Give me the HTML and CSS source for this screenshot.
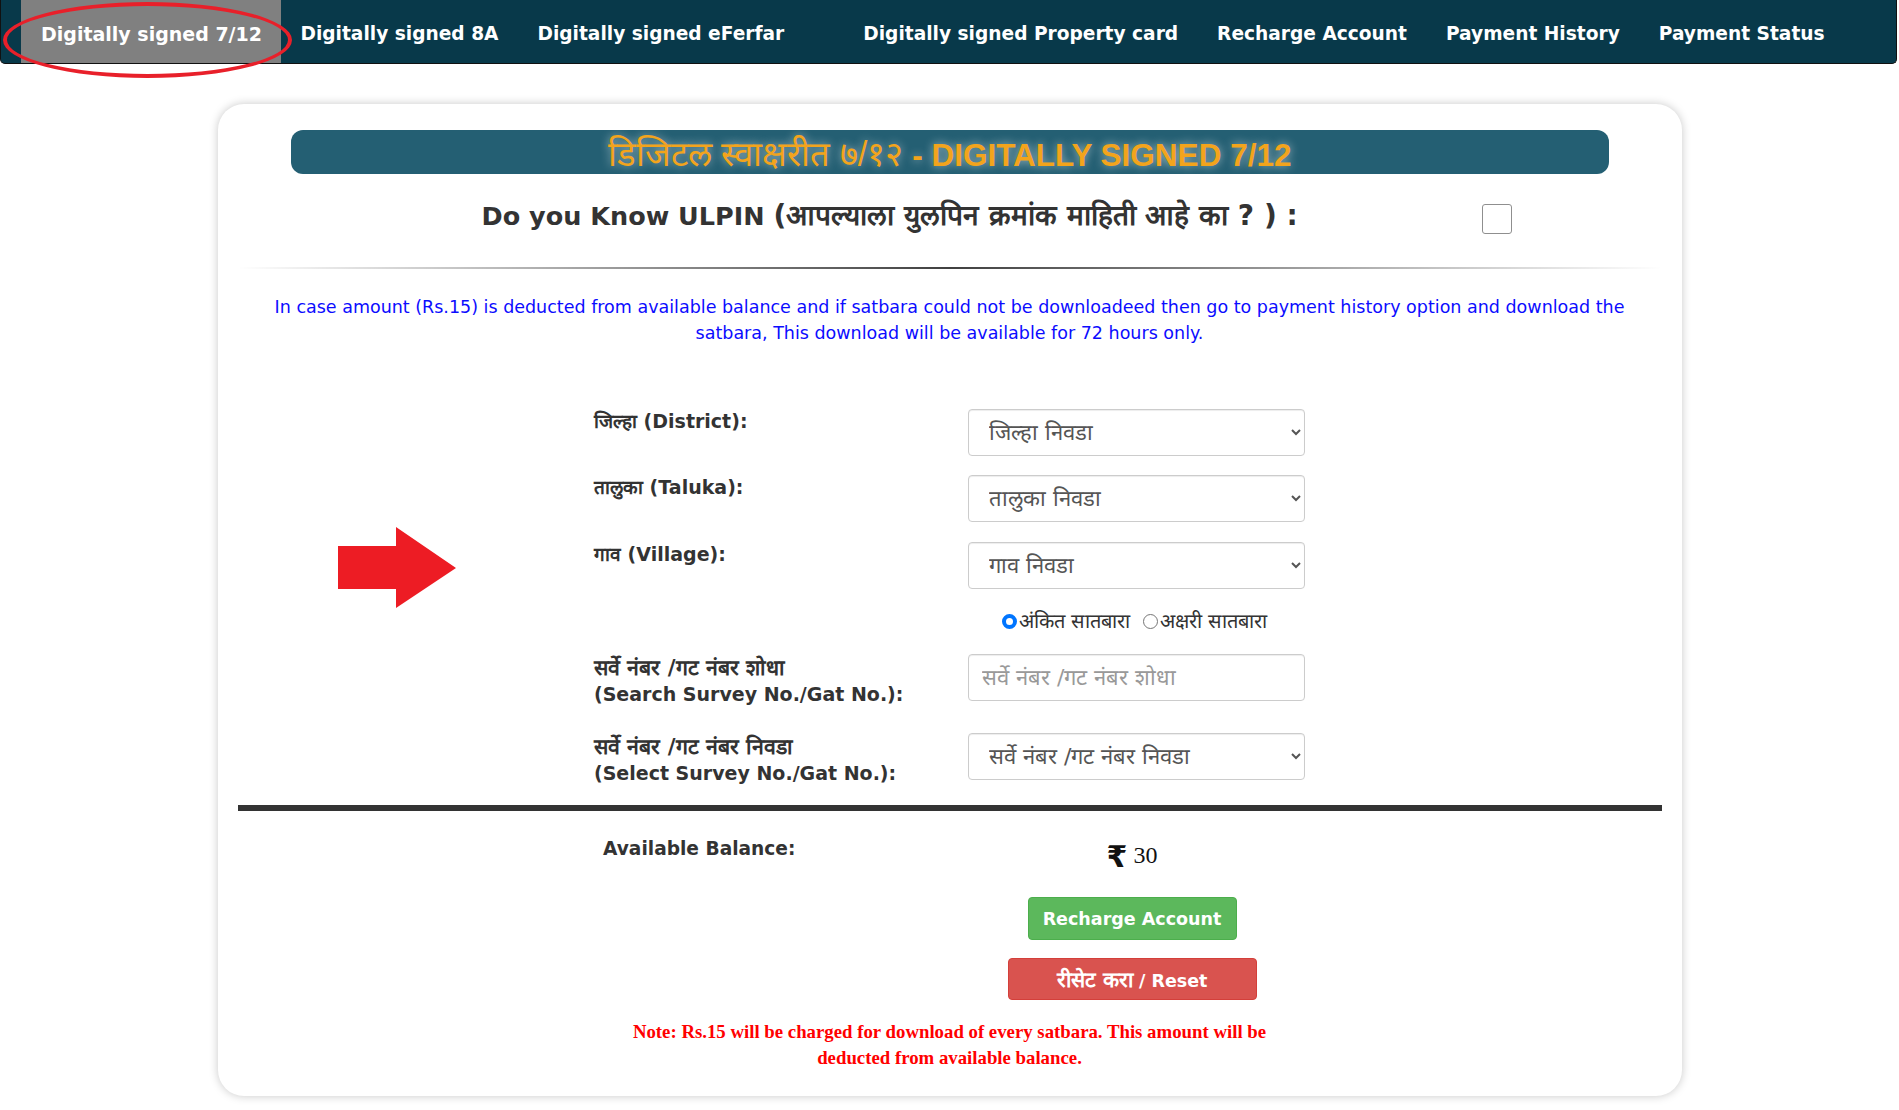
FILE: index.html
```html
<!DOCTYPE html>
<html lang="mr">
<head>
<meta charset="utf-8">
<title>Digitally signed 7/12</title>
<link rel="stylesheet" href="styles.css">
</head>
<body>
<nav class="topnav">
  <a class="nav-item active">Digitally signed 7/12</a>
  <a class="nav-item">Digitally signed 8A</a>
  <a class="nav-item wide">Digitally signed eFerfar</a>
  <a class="nav-item">Digitally signed Property card</a>
  <a class="nav-item">Recharge Account</a>
  <a class="nav-item">Payment History</a>
  <a class="nav-item">Payment Status</a>
</nav>
<div class="annot-ellipse"></div>
<svg class="annot-arrow" width="119" height="82" viewBox="0 0 119 82"><polygon points="0,19 58,19 58,0 118,41 58,81 58,62 0,62" fill="#ed1c24"/></svg>

<main class="card">
  <div class="title-bar"><span class="title-text"><span class="dv-t">डिजिटल स्वाक्षरीत ७/१२</span> - DIGITALLY SIGNED 7/12</span></div>
  <div class="ulpin-row">
    <span class="ulpin-text">Do you Know ULPIN <span class="dv">(आपल्याला युलपिन क्रमांक माहिती आहे का ? ) :</span></span>
    <span class="check-box"></span>
  </div>
  <div class="fade-rule"></div>
  <p class="info">In case amount (Rs.15) is deducted from available balance and if satbara could not be downloadeed then go to payment history option and download the satbara, This download will be available for 72 hours only.</p>

  <div class="form top">
    <div class="lbl">जिल्हा (District):</div>
    <div class="ctl"><select class="fc"><option>जिल्हा निवडा</option></select></div>

    <div class="lbl">तालुका (Taluka):</div>
    <div class="ctl"><select class="fc"><option>तालुका निवडा</option></select></div>

    <div class="lbl">गाव (Village):</div>
    <div class="ctl"><select class="fc"><option>गाव निवडा</option></select></div>

    <div class="lbl"></div>
    <div class="ctl radios">
      <label class="rad"><span class="rdot on"></span>अंकित सातबारा</label>
      <label class="rad"><span class="rdot"></span>अक्षरी सातबारा</label>
    </div>

    <div class="lbl two"><span class="dv-l">सर्वे नंबर /गट नंबर शोधा</span><br>(Search Survey No./Gat No.):</div>
    <div class="ctl"><input class="fc inp" type="text" placeholder="सर्वे नंबर /गट नंबर शोधा"></div>

    <div class="lbl two"><span class="dv-l">सर्वे नंबर /गट नंबर निवडा</span><br>(Select Survey No./Gat No.):</div>
    <div class="ctl"><select class="fc"><option>सर्वे नंबर /गट नंबर निवडा</option></select></div>
  </div>

  <div class="thick-rule"></div>

  <div class="form bottom">
    <div class="lbl bal">Available Balance:</div>
    <div class="ctl center"><span class="rupee">₹</span><span class="amt">30</span></div>

    <div class="lbl"></div>
    <div class="ctl center"><button class="btn green">Recharge Account</button></div>

    <div class="lbl"></div>
    <div class="ctl center"><button class="btn red"><span class="dv-b">रीसेट करा</span> / Reset</button></div>
  </div>

  <p class="note">Note: Rs.15 will be charged for download of every satbara. This amount will be<br>deducted from available balance.</p>
</main>
</body>
</html>
```

FILE: styles.css
```css
html, body { margin: 0; padding: 0; background: #fff; }
body { font-family: "DejaVu Sans", Verdana, sans-serif; color: #333; position: relative; min-height: 1110px; }

.topnav {
  display: flex;
  align-items: stretch;
  height: 63px;
  margin: 0 2px 0 0;
  padding-left: 20px;
  background: #08394a;
  border: 1px solid #111;
  border-top: none;
  border-radius: 0 0 5px 5px;
}
.nav-item {
  display: flex;
  align-items: center;
  padding: 4px 19.5px 0;
  color: #fff;
  font-weight: bold;
  font-size: 18.6px;
  white-space: nowrap;
  cursor: pointer;
}
.nav-item.active { background: #808080; padding: 4px 19px 0 20px; font-size: 19px; }
.nav-item.wide { margin-right: 40px; }

.annot-ellipse {
  position: absolute;
  left: 3px; top: 2px;
  width: 281px; height: 68px;
  border: 4px solid #e8202a;
  border-radius: 50%;
}
.annot-arrow { position: absolute; left: 338px; top: 527px; }

.card {
  box-sizing: border-box;
  width: 1464px;
  height: 992px;
  margin: 40px auto 0;
  padding: 26px 20px 0;
  background: #fff;
  border-radius: 26px;
  box-shadow: 0 0 10px rgba(0,0,0,0.22);
}
.title-bar {
  margin: 0 53px;
  height: 44px;
  border-radius: 12px;
  background: #245f73;
  display: flex;
  align-items: center;
  justify-content: center;
}
.title-text {
  font-family: "Liberation Sans", Arial, sans-serif;
  font-size: 31.5px;
  font-weight: bold;
  color: #f3a41c;
  text-shadow: 0 0 10px rgba(255,255,255,0.6);
  white-space: nowrap;
}
.dv-t { font-size: 1.1em; font-weight: normal; }
.ulpin-row {
  display: flex;
  align-items: center;
  height: 30px;
  margin-top: 30px;
  padding-left: 244px;
}
.ulpin-text { font-size: 25.5px; font-weight: bold; color: #333; white-space: nowrap; margin-top: -11px; }
.dv { font-size: 1.1em; }
.check-box {
  margin-left: auto;
  margin-right: 150px;
  width: 28px; height: 28px;
  border: 1px solid #8f8f8f;
  border-radius: 3px;
}
.fade-rule {
  margin-top: 33px;
  height: 2px;
  background: linear-gradient(to right, rgba(0,0,0,0), rgba(0,0,0,0.75), rgba(0,0,0,0));
}
.info {
  margin: 25px 0 0;
  text-align: center;
  color: #0c0cff;
  font-size: 17.5px;
  line-height: 26px;
}

.form {
  display: grid;
  grid-template-columns: 374px 337px;
  justify-content: center;
}
.form.top {
  margin-top: 63px;
  grid-template-rows: 66px 67px 67px 45px 79px 72px;
}
.lbl { font-size: 19px; font-weight: bold; color: #333; line-height: 24px; }
.lbl.two { line-height: 26px; padding-top: 1px; }
.dv-l { font-size: 1.12em; }
.ctl { display: flex; align-items: flex-start; }
.fc {
  box-sizing: border-box;
  width: 337px;
  height: 47px;
  padding: 0 16px;
  border: 1px solid #ccc;
  border-radius: 4px;
  background: #fff;
  box-shadow: inset 0 1px 1px rgba(0,0,0,0.075);
  color: #555;
  font-family: "DejaVu Sans", sans-serif;
  font-size: 22px;
}
.inp { padding-left: 13px; }
.inp::placeholder { color: #999; }
.radios { justify-content: center; gap: 12px; font-size: 20px; color: #333; line-height: 24px; padding-right: 4px; }
.rad { display: flex; align-items: center; }
.rdot {
  box-sizing: border-box;
  width: 15px; height: 15px;
  border: 1px solid #767676;
  border-radius: 50%;
  margin-right: 2px;
}
.rdot.on { border: 4px solid #0075ff; background: #fff; }

.thick-rule { height: 6px; background: #333; }

.form.bottom {
  margin-top: 26px;
  grid-template-rows: 60px 61px 42px;
}
.lbl.bal { padding-left: 9px; font-size: 18.6px; }
.center { justify-content: center; padding-right: 9px; }
.rupee { font-family: "DejaVu Sans", sans-serif; font-weight: bold; font-size: 30px; line-height: 32px; color: #111; margin-top: 4px; }
.amt { font-family: "Liberation Serif", "Times New Roman", serif; font-size: 24px; line-height: 32px; color: #111; margin-left: 6px; margin-top: 2px; }
.btn {
  box-sizing: border-box;
  border: 1px solid transparent;
  border-radius: 4px;
  color: #fff;
  font-family: "DejaVu Sans", sans-serif;
  font-weight: bold;
  font-size: 17.5px;
  cursor: pointer;
  padding: 0;
}
.btn.green { background: #5cb85c; border-color: #4cae4c; width: 209px; height: 43px; }
.btn.red { background: #d9534f; border-color: #d43f3a; width: 249px; height: 42px; }
.dv-b { font-size: 1.2em; }
.note {
  margin: 19px 0 0;
  text-align: center;
  color: #ff0000;
  font-family: "Liberation Serif", "Times New Roman", serif;
  font-weight: bold;
  font-size: 18.8px;
  line-height: 26px;
}
```
